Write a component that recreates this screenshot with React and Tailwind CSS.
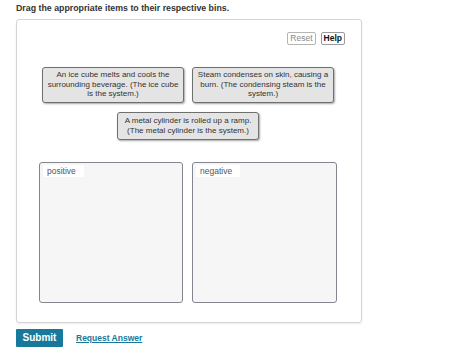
export default function App() {
  const font = { fontFamily: '"Liberation Sans", Arial, sans-serif' };
  const item = "w-[142px] rounded-[3px] border border-[#6f6f6f] bg-[#e4e4e4] shadow-[1px_1px_2px_rgba(0,0,0,0.35)] px-[3px] text-center text-[8px] leading-[9.5px] text-[#333]";
  return (
    <div className="w-[474px] h-[357px] bg-white relative" style={font}>
      <div className="pl-4 pt-[2px] text-[8.8px] font-bold leading-[12px] text-[#333]">
        Drag the appropriate items to their respective bins.
      </div>
      <div className="ml-4 mt-[5px] w-[346px] h-[304px] rounded-[3px] border border-[#d4d4d4] shadow-[0_1px_2px_rgba(0,0,0,0.08)] flex flex-col">
        <div className="flex justify-end gap-[5px] pr-[16px] pt-[12px]">
          <div className="h-[13px] px-[2px] border border-[#b5b5b5] rounded-[2px] text-[8.5px] leading-[11px] text-[#888]">Reset</div>
          <div className="h-[13px] px-[2px] border border-[#9a9a9a] rounded-[2px] text-[8.5px] leading-[11px] font-bold text-[#111]">Help</div>
        </div>
        <div className="flex justify-center gap-[8px] mt-[22px] pr-[2px]">
          <div className={item + " h-[36px] pt-[2px]"}>
            An ice cube melts and cools the surrounding beverage. (The ice cube is the system.)
          </div>
          <div className={item + " h-[36px] pt-[2px] w-[140px]"}>
            Steam condenses on skin, causing a burn. (The condensing steam is the system.)
          </div>
        </div>
        <div className="flex justify-center mt-[9px] pr-[2px]">
          <div className={item + " h-[28px] pt-[3px]"}>
            A metal cylinder is rolled up a ramp. (The metal cylinder is the system.)
          </div>
        </div>
        <div className="flex justify-center gap-[9px] mt-[22px] pr-[2px]">
          <div className="w-[144px] h-[141px] rounded-[3px] border border-[#85858f] bg-[#f6f6f6]">
            <div className="w-fit bg-white ml-[3px] mt-[2px] pl-[4px] pr-[8px] text-[8.5px] leading-[12px] text-[#555]">positive</div>
          </div>
          <div className="w-[145px] h-[141px] rounded-[3px] border border-[#85858f] bg-[#f6f6f6]">
            <div className="w-fit bg-white ml-[3px] mt-[2px] pl-[4px] pr-[8px] text-[8.5px] leading-[12px] text-[#555]">negative</div>
          </div>
        </div>
      </div>
      <div className="flex items-center ml-4 mt-[6px] gap-[13px]">
        <div className="w-[47px] h-[18px] bg-[#17799c] rounded-[1px] text-white font-bold text-[10px] leading-[18px] text-center">Submit</div>
        <div className="text-[#17799c] font-bold text-[8.5px] underline">Request Answer</div>
      </div>
    </div>
  );
}
